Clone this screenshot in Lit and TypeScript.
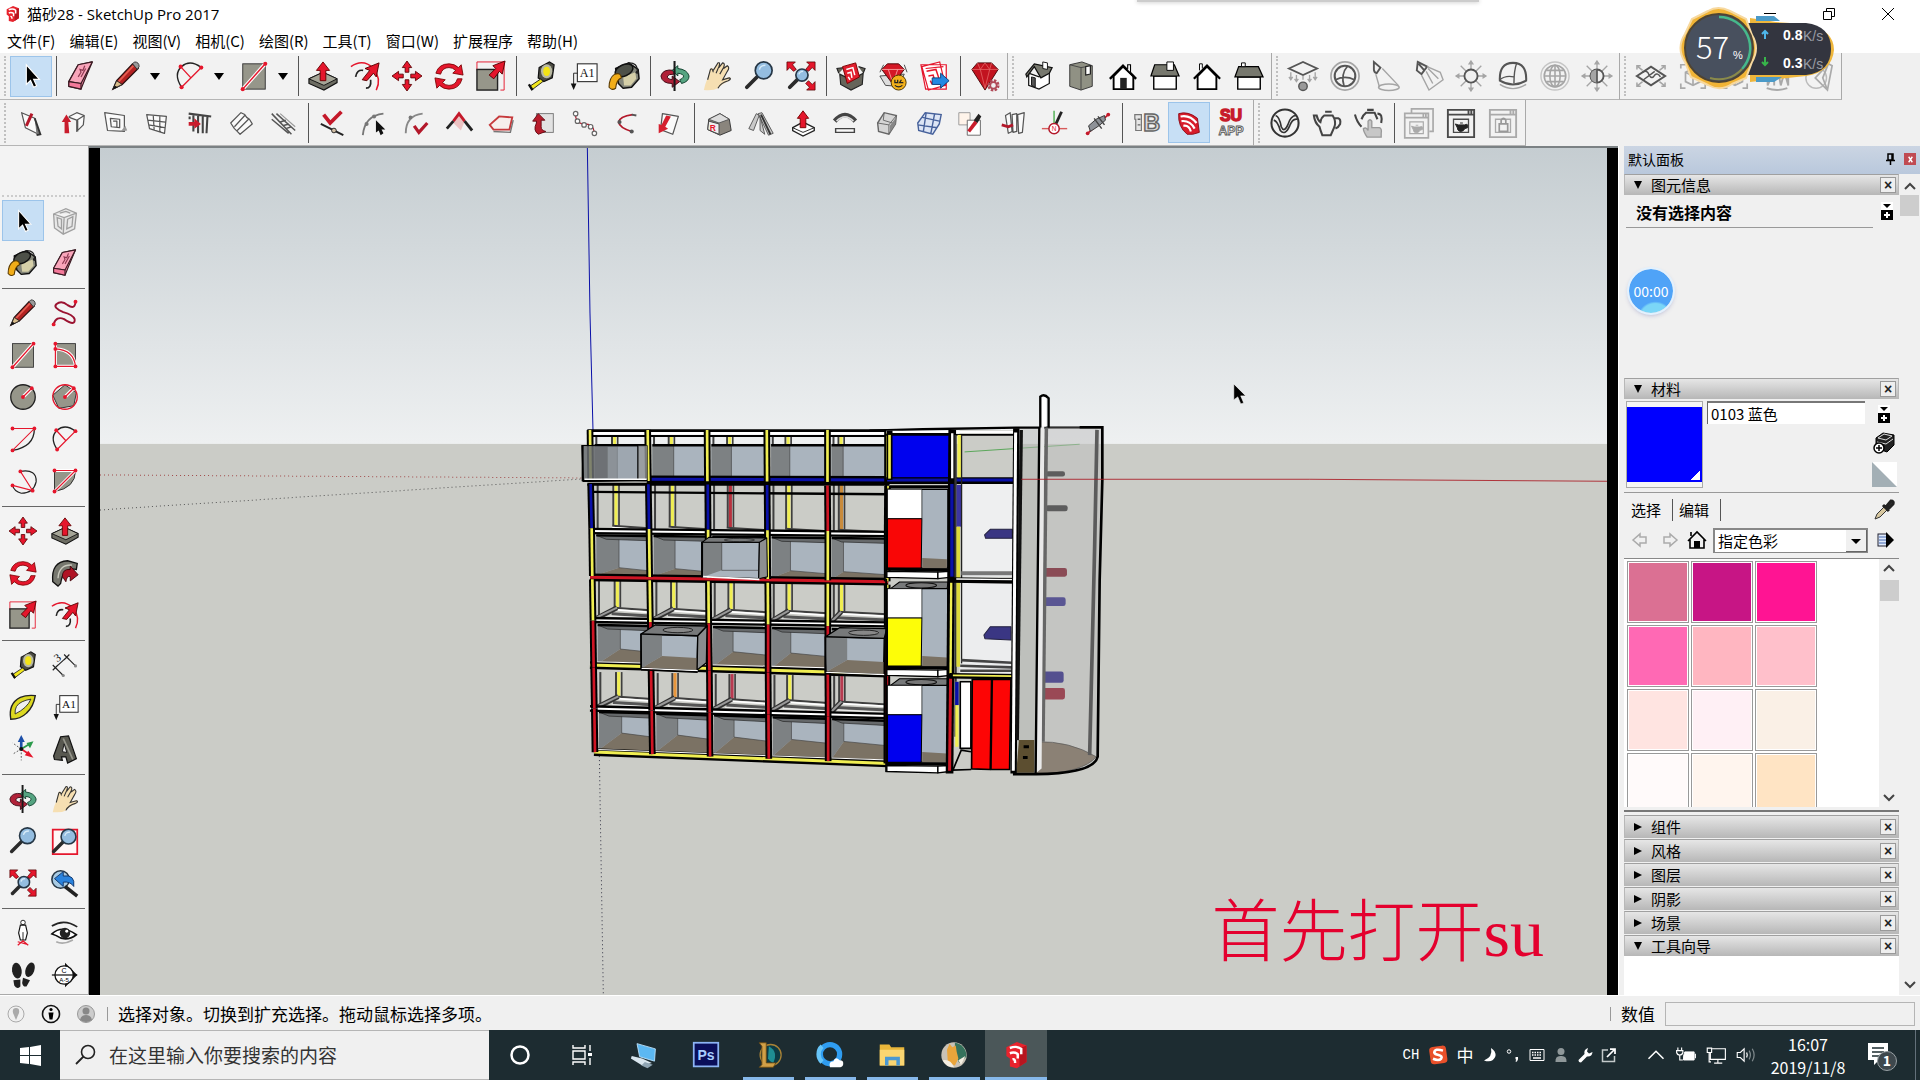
import { LitElement, html, svg, css, TemplateResult } from "lit";
import { customElement, property } from "lit/decorators.js";
import { classMap } from "lit/directives/class-map.js";

const R = "#e5162c";

const dot = (x: number, y: number) => svg`<circle cx=${x} cy=${y} r="2.2" fill=${R}/>`;

const cursor = svg`<path d="M11 4V25L15.500 20.800L18.800 28L22 26.500L18.800 19.600H25Z" fill="#000" stroke="#fff" stroke-width="1.200"/>`;
const eraser = svg`<g stroke="#3a1a22" stroke-width="1.300" stroke-linejoin="round"><path d="M3 22L13 4L28 1L20 20L16 30L3 27Z" fill="#f58ba6"/><path d="M3 22L16 24L28 1L13 4Z" fill="#f9a5ba"/><path d="M3 22L16 24V30L3 27Z" fill="#f4799a"/></g><path d="M13 17L16 12L15 9L18 10L20 5M16 17L21 8" fill="none" stroke="#8e3a52" stroke-width="1.300"/>`;
const pencil = svg`<path d="M2 30L6 21L23 3L29 8L12 25Z" fill="#b32222" stroke="#2a1010" stroke-width="1.300"/><path d="M8 22L24 5" stroke="#e45c50" stroke-width="2"/><path d="M23 3L25 1Q30 1 30 6L28 9Z" fill="#9a9a9a" stroke="#333"/><path d="M2 30L6 21L12 25Z" fill="#d9bd8c" stroke="#222"/><path d="M2 30L4 26L7 28Z" fill="#111"/>`;
const arc2 = svg`<path d="M7 28Q-2 14 7 6Q16 -2 28 7" fill="none" stroke="#222" stroke-width="1.500"/><path d="M7 28L28 7M6 6L17 18" stroke=${R} stroke-width="1.400"/>${dot(7, 28)}${dot(28, 7)}${dot(6, 6)}`;
const rect = svg`<rect x="4" y="3" width="24" height="27" fill="#96968a" stroke="#333"/><path d="M4 30L28 3" stroke="#fff" stroke-width="4"/><path d="M4 30L28 3" stroke=${R} stroke-width="1.600"/>${dot(4, 30)}${dot(28, 3)}`;
const pushpull = svg`<path d="M1 19L16 12L31 19V23L17 31L1 24Z" fill="#6d6d63" stroke="#111" stroke-width="1.200"/><path d="M1 19L16 12L31 19L17 26Z" fill="#a5a597" stroke="#111"/><path d="M13 21V10H9L16 1L23 10H19V21Z" fill=${R} stroke="#600"/>`;
const redArrow = svg`<path d="M13 20L21 10L16 8L31 2L28 17L25 13L18 21Z" fill=${R} stroke="#500"/>`;
const offset = svg`<path d="M1 6Q14 -3 25 8Q34 19 28 31" fill="none" stroke=${R} stroke-width="1.600"/><path d="M6 17Q7 9 14 10M17 29Q23 29 22 20" fill="none" stroke="#222" stroke-width="1.800"/>${redArrow}`;
const move = svg`<g fill=${R} stroke="#500" stroke-width="0.900"><path d="M16 0L21 7H18V12H14V7H11Z"/><path d="M16 32L21 25H18V20H14V25H11Z"/><path d="M0 16L7 11V14H12V18H7V21Z"/><path d="M32 16L25 11V14H20V18H25V21Z"/></g>`;
const rotate = svg`<g fill=${R} stroke="#700" stroke-width="0.900"><path d="M2 13Q5 3 16 3Q22 3 26 7L29 4L31 15L20 13L23 10Q20 7 16 7Q9 7 7 14Z"/><path d="M30 19Q27 30 16 30Q10 30 6 26L3 29L1 18L12 20L9 23Q12 26 16 26Q23 26 25 19Z"/></g>`;
const scale = svg`<path d="M1 1H30V31" fill="none" stroke=${R}/><path d="M1 1V10M26 31H30" stroke=${R}/><rect x="1" y="9" width="22" height="22" fill="#96968a" stroke="#222" stroke-width="1.500"/><path d="M14 15L21 8L18 5L31 0L28 14L25 11L19 19Z" fill=${R} stroke="#500"/>`;
const tape = svg`<path d="M14 7L25 1L30 4L28 18L19 22L13 18Z" fill="#4c4c44" stroke="#111" stroke-width="1.300"/><ellipse cx="22" cy="11" rx="6" ry="7.500" fill="#b9b9a2"/><ellipse cx="22" cy="11" rx="3.600" ry="5" fill="#f3e415"/><path d="M16 19L4 27L6 31L18 22Z" fill="#f2e71c" stroke="#222"/><path d="M3 25L7 31" stroke="#111" stroke-width="2.500"/>`;
const textA = svg`<rect x="10" y="3" width="21" height="19" fill="#fff" stroke="#333" stroke-width="1.200"/><text x="20.500" y="17.500" font-size="13" font-family="Liberation Serif, serif" text-anchor="middle" fill="#111">A1</text><path d="M10 13H6V26" fill="none" stroke="#222"/><path d="M3 24H9L6 31Z" fill="#111"/>`;
const paint = svg`<path d="M6 8L20 2L30 9L31 19L23 28L14 29L9 24Z" fill="#84867a" stroke="#111" stroke-width="1.600" stroke-linejoin="round"/><path d="M14 17L27 12L28 19L22 26L15 26Z" fill="#d5cfa8"/><ellipse cx="15" cy="10" rx="10" ry="6" transform="rotate(-24 15 10)" fill="#4d5048" stroke="#111" stroke-width="1.600"/><path d="M19 2Q30 1 29 12" fill="none" stroke="#222" stroke-width="1.300"/><circle cx="29" cy="12" r="1.700" fill="#222"/><path d="M5 14Q12 12 12 18Q7 20 6 29Q2 32 -1 28Q-1 18 5 14Z" fill="#f2ad18" stroke="#5a3a00" stroke-width="1.200"/>`;
const orbit = svg`<path d="M15 10Q3 8 1 16Q2 24 13 24V28L21 22L13 16V20Q7 19 8 16Q9 14 15 14Z" fill="#b02138" stroke="#3d0812"/><path d="M19 8V5L13 10L19 16V13Q26 14 25 17Q24 19 21 20L23 24Q31 22 31 16Q29 9 19 8Z" fill="#55a481" stroke="#0d3d2a"/><path d="M15.500 0V32" stroke="#1a1a1a" stroke-width="2.200"/>`;
const hand = svg`<path d="M2 31Q4 22 6 19L8 10Q10 5 12 9L17 2Q20 1 19 5L22 2Q25 2 24 6L28 5Q30 7 27 11L22 19L29 17Q32 18 29 21Q22 24 17 29Q12 32 2 31Z" fill="#f6dfb2"/><path d="M6 20L9 9Q11 7 12 12M12 10L17 2Q20 1 18 6L15 13M18 7L22 2Q25 2 23 7L19 14M23 8L27 5Q30 7 27 11L22 20L29 18Q32 19 28 21Q20 23 17 29" fill="none" stroke="#333" stroke-width="1.200"/>`;
const lens = (x: number, y: number, r: number) => svg`<path d=${`M${x - r * 0.7} ${y + r * 0.7}L${x - r * 2} ${y + r * 2}`} stroke="#2b2b2b" stroke-width="4" stroke-linecap="round"/><circle cx=${x} cy=${y} r=${r} fill="#94bde0" stroke="#263746" stroke-width="1.800"/><path d=${`M${x - r * 0.5} ${y - r * 0.1}Q${x - r * 0.4} ${y - r * 0.6} ${x + r * 0.2} ${y - r * 0.6}`} stroke="#d7ebf8" stroke-width="1.500" fill="none"/>`;
const zoom = lens(21, 10, 9);
const zoomWin = svg`<rect x="2" y="3" width="28" height="28" fill="#fff6f6" stroke=${R} stroke-width="2"/>${lens(20, 11, 8.5)}`;
const zoomExt = svg`${lens(17, 15, 6.5)}<g fill=${R} stroke="#500" stroke-width="0.800"><path d="M1 1H10L7 4L11 9L8 11L4 7L1 10Z"/><path d="M31 1H22L25 4L21 9L24 11L28 7L31 10Z"/><path d="M31 31H22L25 28L21 24L24 21L28 25L31 22Z"/></g>`;
const zoomPrev = svg`<circle cx="11" cy="12" r="10" fill="#a8cbe4" stroke="#263746" stroke-width="1.800"/><path d="M4 11L14 3V8Q28 6 26 20Q22 14 14 15V20Z" fill="#2a82dc" stroke="#0b2f63"/><path d="M16 20L30 31" stroke="#222" stroke-width="4"/>`;
const ruby = svg`<path d="M2 9L8 2H23L30 9L16 31Z" fill="#c2131f" stroke="#4b0609"/><path d="M8 2L11 9L16 2L21 9L23 2M2 9H30M11 9L16 29L21 9" fill="none" stroke="#e56a6a" stroke-width="0.800"/>`;
const gear = (x: number, y: number, c: string) => svg`<circle cx=${x} cy=${y} r="5" fill="none" stroke=${c} stroke-width="3" stroke-dasharray="2.500 1.400"/><circle cx=${x} cy=${y} r="3.400" fill="#f0f0f0" stroke=${c} stroke-width="1.800"/>`;
const warehouse = svg`<path d="M3 13L1 8L9 7M29 13L31 8L24 6M4 14L16 20L29 13L28 25L16 31L5 25Z" fill="#65645a" stroke="#222" stroke-width="1.200"/><path d="M7 6L21 2L25 17L12 24Z" fill="#e21d2d" stroke="#700"/><path d="M11 9L18 7L20 15M12 13L16 12L17 18M13 17L15 20" fill="none" stroke="#fff" stroke-width="1.600"/>`;
const extWh = svg`<path d="M2 12L6 4M28 4L31 12M2 16L8 26L22 27L28 14Z" fill="#ddd" stroke="#444"/><path d="M4 9L10 3H22L28 9L16 25Z" fill="#d41826" stroke="#4b0609"/><path d="M4 9H28M11 9L16 24L21 9" stroke="#f59a9a" fill="none"/><circle cx="22" cy="23" r="8" fill="#f3b11c" stroke="#4a3300"/><path d="M18 20V23H21V20M25 20L23 23H27M18 26Q22 29 26 26" stroke="#222" fill="none" stroke-width="1.300"/>`;
const layout = svg`<path d="M2 6L21 1L27 26L9 31Z M6 8L25 6M1 4H28V30H6Z" fill="#fff" stroke=${R} stroke-width="1.300"/><path d="M7 11L17 9L20 18M9 16L14 15L16 22M11 21L13 25" fill="none" stroke=${R} stroke-width="1.600"/><path d="M13 18H22V13L31 21L22 29V25H13Z" fill="#2388e2" stroke="#0c3c78"/>`;
const roofHouse = svg`<path d="M5 13V26L16 30L27 24V12L16 17Z" fill="#fff" stroke="#111" stroke-width="1.300"/><path d="M2 14L11 3L30 7L27 13L18 18L11 6L3 17Z" fill="#77786e" stroke="#111" stroke-width="1.300"/><path d="M20 8V1L25 2V9Z" fill="#fff" stroke="#111"/><path d="M8 17L12 18V28L8 26Z" fill="#555" stroke="#111"/>`;
const topView = svg`<path d="M4 4L17 1L28 5V27L16 31L4 27Z" fill="#909184" stroke="#333"/><path d="M4 4L16 7L28 5M16 7V31" fill="none" stroke="#444"/><path d="M21 6L26 5V14L21 15Z" fill="#fff" stroke="#222" stroke-width="1.300"/>`;
const frontHouse = svg`<path d="M6 16V30H27V16L16 6Z" fill="#fff" stroke="#000" stroke-width="2"/><path d="M2 19L16 5L30 19" fill="none" stroke="#000" stroke-width="2.600"/><path d="M13 18H20V30H13Z" fill="#222"/><path d="M21 9V4H24V12" fill="#fff" stroke="#000" stroke-width="1.200"/>`;
const sideHouse = svg`<path d="M4 16H28V30H4Z" fill="#fff" stroke="#000" stroke-width="1.500"/><path d="M5 4H26L31 16H1Z" fill="#77786e" stroke="#000" stroke-width="1.300"/><path d="M18 1H25V10H18Z" fill="#fff" stroke="#000"/>`;
const backHouse = svg`<path d="M6 16V30H26V16L16 6Z" fill="#fff" stroke="#000" stroke-width="2"/><path d="M2 19L16 5L30 19" fill="none" stroke="#000" stroke-width="2.400"/><path d="M8 10V3H11V8" fill="#fff" stroke="#000"/>`;
const leftHouse = svg`<path d="M4 17H28V30H4Z" fill="#fff" stroke="#000" stroke-width="1.500"/><path d="M5 6H26L31 17H1Z" fill="#77786e" stroke="#000" stroke-width="1.300"/><path d="M8 2H12V6H8Z" fill="#fff" stroke="#000"/>`;
const g = "#a5a5a5";
const D = "#555";
const sun = (half: boolean) => svg`<g stroke=${g} stroke-width="1.400" fill=${g}><path d="M16 1V31M1 16H31M5 5L27 27M27 5L5 27"/><path d="M16 0L18 3H14ZM16 32L18 29H14ZM0 16L3 14V18ZM32 16L29 14V18Z"/></g><circle cx="16" cy="16" r="7" fill="#f0f0f0" stroke=${D} stroke-width="2"/>${half ? svg`<path d="M16 9A7 7 0 0 0 16 23Z" fill=${g}/><path d="M16 9V23" stroke=${D} stroke-width="1.800"/>` : ""}`;
const lightRect = svg`<path d="M1 8L16 1L31 8L16 15Z" fill="none" stroke=${D} stroke-width="2"/><path d="M3 12V19M9 15V21M23 15V21M29 12V19M16 16V20M1 17L3 20L5 17M7 19L9 22L11 19M21 19L23 22L25 19M27 17L29 20L31 17" fill="none" stroke=${g} stroke-width="1.400"/><circle cx="16" cy="27" r="4.500" fill="#9a9a9a" stroke=${D} stroke-width="1.500"/>`;
const lightSphere = svg`<circle cx="16" cy="16" r="15" fill="none" stroke=${g} stroke-width="1.800"/><circle cx="16" cy="16" r="11" fill="none" stroke=${D} stroke-width="2.200"/><path d="M6 20Q16 15 26 20M19 5Q11 14 15 27" fill="none" stroke=${D} stroke-width="1.800"/>`;
const spot = svg`<path d="M2 1L9 7L5 13Q2 12 2 9Z" fill="none" stroke=${D} stroke-width="2"/><path d="M4 14L8 28M11 8L28 26" stroke=${g} stroke-width="1.500"/><ellipse cx="18" cy="28" rx="11" ry="3.500" fill="none" stroke=${g} stroke-width="1.600"/>`;
const ies = svg`<path d="M4 1L14 6L8 14L3 10Z M5 3L11 10" fill="none" stroke=${D} stroke-width="2"/><path d="M8 15L16 31L31 20L28 12L14 6M13 11L20 24M15 8L26 19" fill="none" stroke=${g} stroke-width="1.500"/>`;
const dome = svg`<path d="M2 21Q1 2 16 2Q31 2 30 21Q16 29 2 21Z" fill="none" stroke=${D} stroke-width="2.200"/><path d="M20 2Q17 10 17 24M2 20Q8 15 17 17" fill="none" stroke=${D} stroke-width="1.500"/><path d="M2 25Q16 34 30 25" fill="none" stroke=${g} stroke-width="1.500"/>`;
const globe = svg`<circle cx="16" cy="16" r="15" fill="none" stroke="#c5c5c5" stroke-width="1.500"/><g fill="none" stroke=${g} stroke-width="1.700"><circle cx="16" cy="16" r="11.500"/><ellipse cx="16" cy="16" rx="5.500" ry="11.500"/><path d="M16 4V28M5 16H27M7 10H25M7 22H25"/></g>`;
const plane = svg`<path d="M1 16L16 6L31 16L16 26Z" fill="none" stroke=${D} stroke-width="2.200"/><path d="M7 12Q12 9 14 15Q17 20 20 15Q23 12 26 17M8 20L20 11" fill="none" stroke=${D} stroke-width="1.600"/><path d="M2 6L7 10M30 6L25 10M2 26L7 22M30 26L25 22M1 9V5H5M27 5H31V9M1 23V27H5M27 27H31V23" fill="none" stroke=${g} stroke-width="1.600"/>`;
const bracket = svg`<g fill="none" stroke="#aaa" stroke-width="1.800"><path d="M3 8V4H8M24 4H29V8M29 24V29H24M8 29H3V24"/><path d="M8 12L16 8L24 12V22L16 26L8 22ZM8 12L16 16L24 12M16 16V26"/></g>`;
const fur = svg`<g fill="none" stroke="#a9a9a9" stroke-width="2"><path d="M6 8V26L13 10V26M17 9L20 26L24 12L28 26V9"/><path d="M5 29Q16 33 27 29"/></g>`;
const clipper = svg`<circle cx="13" cy="18" r="11" fill="none" stroke="#bbb" stroke-width="1.500"/><path d="M26 3L30 5L25 31L12 18ZM26 3L20 18L25 31" fill="none" stroke="#aaa" stroke-width="1.800"/>`;
const window3 = (c: string, inner: TemplateResult) => svg`<path d="M2 2H30V31H2ZM2 7H30M24 2V7M27 2V7" fill="none" stroke=${c} stroke-width="2"/><path d="M8 12H24V26H8Z" fill="none" stroke=${c} stroke-width="1.400"/>${inner}`;
const teapotSolid = (c: string) => svg`<path d="M10 17L13 18H20Q24 16 23 21L20 22Q19 25 15 25Q12 24 12 21ZM15 16H18" fill=${c} stroke=${c}/>`;
const teapot = svg`<g fill="none" stroke="#444" stroke-width="2.200"><path d="M2 8H5Q6 13 9 15Q10 10 13 8H22Q26 14 24 20L20 29H11Q9 24 8 20Q3 16 2 8ZM14 4H21M24 11H28Q31 12 30 17Q28 21 25 22"/></g>`;
const teapotHand = svg`<g fill="none" stroke="#444" stroke-width="2.200"><path d="M1 7Q3 15 8 20M8 12Q10 7 13 5H22L25 12M14 2H21M25 6Q31 6 29 16"/></g><path d="M15 14Q17 11 19 14V21H27Q30 22 29 27V31H14Q10 25 10 22Q13 20 15 24Z" fill="#c7c7c7" stroke="#999" stroke-width="1.400"/>`;
const vray = svg`<circle cx="16" cy="16" r="14.500" fill="none" stroke="#333" stroke-width="2.200"/><path d="M6 8Q10 9 12 20Q15 27 19 18Q22 8 28 8M4 13Q8 14 11 24Q16 30 21 19Q24 11 29 12" fill="none" stroke="#333" stroke-width="1.800"/>`;
const freehand = svg`<path d="M3 29Q6 19 15 23Q28 32 27 23Q25 18 14 15Q2 10 6 6Q12 1 19 7Q28 13 28 2" fill="none" stroke="#9b1230" stroke-width="2.200"/>${dot(3, 29)}${dot(28, 3)}`;
const rotRect = svg`<rect x="6" y="3" width="22" height="26" fill="#96968a" stroke="#333"/><path d="M5 3V29H28Q26 10 5 9" fill="none" stroke="#fff" stroke-width="3.500"/><path d="M5 3V29H28Q26 10 5 9" fill="none" stroke=${R} stroke-width="1.400"/>${dot(5, 3)}${dot(5, 9)}${dot(5, 29)}${dot(28, 29)}`;
const circle = svg`<circle cx="16" cy="16" r="14" fill="#96968a" stroke="#222" stroke-width="1.500"/><path d="M16 16L26 6" stroke="#fff" stroke-width="4"/><path d="M16 16L26 6" stroke=${R} stroke-width="1.500"/>${dot(16, 16)}${dot(26, 6)}`;
const polygonI = svg`<path d="M16 2L29 11L26 26L9 29L2 14Z" fill="#96968a" stroke="#222"/><circle cx="16" cy="16" r="14" fill="none" stroke=${R} stroke-width="1.500"/><path d="M16 16L26 6" stroke="#fff" stroke-width="4"/><path d="M16 16L26 6" stroke=${R} stroke-width="1.500"/>${dot(16, 16)}${dot(26, 6)}`;
const arcA = svg`<path d="M29 4Q29 25 4 29" fill="none" stroke="#222" stroke-width="1.500"/><path d="M4 4H29L4 29" fill="none" stroke=${R} stroke-width="1.200"/>${dot(4, 4)}${dot(29, 4)}${dot(4, 29)}`;
const arc3 = svg`<path d="M13 5Q32 2 31 17Q28 30 14 30Q6 28 4 21" fill="none" stroke="#222" stroke-width="1.400"/><path d="M13 5L27 27L4 21" fill="none" stroke=${R} stroke-width="1.200"/>${dot(13, 5)}${dot(27, 27)}${dot(4, 21)}`;
const pie = svg`<path d="M4 4H28Q28 24 4 28Z" fill="#96968a" stroke="#222"/><path d="M4 4H28L4 28" fill="none" stroke="#fff" stroke-width="3.500"/><path d="M4 4H28L4 28" fill="none" stroke=${R} stroke-width="1.300"/>${dot(4, 4)}${dot(28, 4)}${dot(4, 28)}`;
const followMe = svg`<path d="M2 26Q0 3 19 2L30 5L29 12Q14 8 11 28L8 31Z" fill="#76776e" stroke="#111" stroke-width="1.500"/><path d="M8 22Q9 6 24 7" fill="none" stroke="#c9c9bd" stroke-width="1.600"/><path d="M13 20Q13 11 22 12V8L31 18L22 25V20Q18 19 17 26Z" fill="#b01425" stroke="#3e0309"/>`;
const dim = svg`<path d="M5 19L18 7M5 19L14 28M18 7L28 17M2 16L8 22M2 22L8 16M15 4L21 10M15 10L21 4" stroke="#222" stroke-width="1.300" fill="none"/><text x="5" y="12" font-size="13" font-family="Liberation Serif, serif" transform="rotate(-35 8 9)" fill="#111">3</text><circle cx="14" cy="28" r="1.800" fill="#888"/><circle cx="28" cy="17" r="1.800" fill="#888"/>`;
const protractor = svg`<path d="M2 30Q-1 12 13 5Q20 2 30 3Q28 16 20 23Q13 30 2 30Z" fill="#dcd820" stroke="#222" stroke-width="1.600"/><path d="M7 24Q6 14 15 10Q19 8 25 7Q21 17 7 24Z" fill="#f0f0f0" stroke="#222"/>`;
const axes = svg`<path d="M14 16V4" stroke="#1c4fa8" stroke-width="3"/><path d="M14 0L18 8H10Z" fill="#1c4fa8"/><path d="M14 16L24 10" stroke="#2a9a4b" stroke-width="2"/><path d="M28 7L24 15L20 9Z" fill="#2a9a4b"/><path d="M14 16L23 22" stroke=${R} stroke-width="2"/><path d="M28 26L18 23L22 18Z" fill=${R}/><path d="M14 16V29M14 16L4 22M14 16L4 9" stroke="#444" stroke-dasharray="2 2"/><circle cx="14" cy="16" r="2.400" fill="#111"/>`;
const text3d = svg`<path d="M3 24L11 2L20 1L29 27L19 32L17 25H12L13 29L4 28Z" fill="#585850" stroke="#111" stroke-width="1.400"/><path d="M13 19L15 10L18 20Z" fill="#f0f0f0" stroke="#111"/><path d="M14 4L25 28" stroke="#96968c" stroke-width="2"/>`;
const person = svg`<circle cx="16" cy="4" r="2.600" fill="#fff" stroke="#111"/><path d="M13 7H19L21 16L19 24H13L11 16Z" fill="#fff" stroke="#111" stroke-width="1.300"/><path d="M16 15V24" stroke="#111"/><path d="M10 30L16 25L22 30M10 26L21 29" stroke=${R} fill="none" stroke-width="1.400"/>`;
const eye = svg`<path d="M1 8Q15 -1 30 9" fill="none" stroke="#222" stroke-width="2"/><path d="M1 17Q13 6 29 18Q17 27 6 19Z" fill="#fff" stroke="#111" stroke-width="1.800"/><circle cx="16" cy="16" r="6" fill="#222"/><circle cx="18" cy="14" r="1.700" fill="#fff"/><path d="M6 26Q14 30 25 24" fill="none" stroke="#aaa" stroke-width="2"/>`;
const feet = svg`<g fill="#202020"><ellipse cx="9" cy="11" rx="5.500" ry="9" transform="rotate(-8 9 11)"/><path d="M5 22L13 21L13 29Q9 33 6 28Z"/><ellipse cx="24" cy="10" rx="5" ry="8.500" transform="rotate(20 24 10)"/><path d="M16 19L24 22L20 29Q16 30 15 25Z"/></g>`;
const section = svg`<path d="M16 2L30 16L16 30" fill="#111"/><circle cx="15" cy="16" r="10.500" fill="#fff" stroke="#111" stroke-width="1.500"/><path d="M1 16H30" stroke="#111" stroke-width="1.400"/><text x="15" y="14" font-size="8" text-anchor="middle" font-family="Liberation Sans">C</text><text x="15" y="24" font-size="7" text-anchor="middle" font-family="Liberation Sans">A-5</text>`;
const component = svg`<path d="M3 8L17 2L29 7L27 25L14 31L4 24Z M3 8L15 12L29 7M15 12L14 31M7 12L12 14V25L8 22ZM19 14L25 11L24 22L18 25Z M10 7L17 5L22 7" fill="#e8e8e8" stroke="#a0a0a0" stroke-width="1.500"/>`;

// Plugin toolbar glyphs share a thin grey pen with red accents.
const P = (d: string, extra: unknown = "") => svg`<path d=${d} fill="#fafafa" stroke="#555" stroke-width="1.300" stroke-linejoin="round"/>${extra}`;
const acc = (d: string, w = 2.2) => svg`<path d=${d} fill="none" stroke="#b3182a" stroke-width=${w}/>`;
const p1 = P("M6 5L20 11L24 28L10 21Z", svg`<path d="M20 11L26 28L22 29" fill="#777" stroke="#333" stroke-width="2"/>${acc("M11 19L17 6", 3.2)}`);
const p2 = P("M12 9L20 5L28 8L27 18L20 25V13L12 10Z M20 13L28 8M21 13V25", svg`<path d="M7 27V15H4L9 7L14 15H11L12 27Z" fill="#c91c2c"/>`);
const p3 = P("M5 5L26 8V25L8 24Z M11 11L21 12V21L12 20Z M14 14H18V20", svg`<path d="M22 25L29 24L27 19" fill="#999"/>`);
const p4 = P("M5 7L26 9L24 27L8 22Z M6 13L25 15M7 18L24 21M12 8L13 24M19 9V26");
const p5 = svg`<path d="M5 6L29 9M6 9V12M10 8V25M15 8V27M20 9V27M25 9L24 27" fill="none" stroke="#444" stroke-width="2.200"/><path d="M5 15H11V11L18 17L11 22V19H5Z" fill="#c91c2c"/>`;
const p6 = P("M5 16L16 5L20 7L22 10L25 12L28 17L15 28L12 25L9 22Z M9 20L20 8M12 24L24 12");
const p7 = svg`<path d="M4 6L25 28M9 6L29 24M4 12L22 27M13 15L19 13M16 19L22 17M19 22L25 20" fill="none" stroke="#555" stroke-width="1.600"/><path d="M13 6L29 20" stroke="#999" stroke-width="1.200"/>`;
const p8 = svg`<path d="M3 17L27 29" stroke="#222" stroke-width="2"/><path d="M6 7L13 16L25 4" fill="none" stroke="#c4192a" stroke-width="4"/><circle cx="17" cy="24" r="2.500" fill="#d0bda4" stroke="#222"/>`;
const p9 = svg`<path d="M3 29Q5 8 25 6" fill="none" stroke="#777" stroke-width="2"/><circle cx="7" cy="17" r="2.200" fill="#777"/><circle cx="15" cy="9" r="2.200" fill="#777"/><path d="M17 13V26L20 24L22 29L25 27L23 23H27Z" fill="#111"/>`;
const p10 = svg`<path d="M4 27Q4 8 22 6" fill="none" stroke="#888" stroke-width="2"/><circle cx="9" cy="10" r="2" fill="#777"/>${acc("M13 19L18 26L27 16", 3.4)}`;
const p11 = svg`<path d="M10 16L16 6L22 14L18 24Z" fill="#ecc3c3"/><path d="M10 14L16 6L22 14" fill="none" stroke="#c4192a" stroke-width="3"/><path d="M3 22L10 14M22 14L30 24" fill="none" stroke="#222" stroke-width="3"/>`;
const p12 = svg`<path d="M4 18L14 9L28 10L25 23L8 23Z" fill="#f6efec" stroke="#c63a3c" stroke-width="2"/><path d="M8 25L26 26L29 13" fill="none" stroke="#777" stroke-width="1.500"/>`;
const p13 = svg`<rect x="9" y="6" width="18" height="20" fill="#e2e2e2" stroke="#777"/><path d="M11 28Q5 24 9 16V14H5L11 6L18 13H14V20Q14 24 19 25Z" fill="#b81c2b" stroke="#650912"/>`;
const p14 = svg`<g fill="#fff" stroke="#666" stroke-width="1.300"><path d="M6 5Q5 15 13 17Q25 16 26 26" fill="none" stroke="#b3182a"/><circle cx="6" cy="6" r="2.400"/><circle cx="8" cy="14" r="2.400"/><circle cx="15" cy="18" r="2.400"/><circle cx="22" cy="20" r="2.400"/><circle cx="26" cy="27" r="2.400"/></g>`;
const p15 = svg`${acc("M22 7Q8 9 7 15Q8 21 21 25", 1.8)}<circle cx="8" cy="15" r="2.200" fill="#555"/><circle cx="21" cy="25" r="2.200" fill="#555"/><path d="M21 7L26 8" stroke="#555" stroke-width="2"/>`;
const p16 = P("M9 6L26 9L20 28L7 23Z", svg`<path d="M18 9L12 20L15 22L5 27V17L8 18L13 8Z" fill="#d5202f"/>`);
const p17 = svg`<path d="M5 12L17 6L27 12L29 24L17 29L4 23Z" fill="#8a857d" stroke="#333"/><path d="M5 12L16 16L27 12L17 6Z" fill="#ddd" stroke="#555"/><path d="M5 14L16 17V28L4 23Z" fill="#eee" stroke="#444"/><text x="6" y="24" font-size="9" font-weight="700" font-family="Liberation Sans" fill=${R}>R</text>`;
const p18 = svg`<path d="M3 22L11 6L14 8L8 24ZM13 6L17 5L29 27L24 29ZM15 9L20 28L15 24Z" fill="#c9c9c9" stroke="#555"/><path d="M16 7L26 28" stroke="#333" stroke-width="2"/>`;
const p19 = svg`<path d="M5 21L16 15L28 21V24L16 30L5 24Z" fill="#fff" stroke="#222" stroke-width="1.400"/><path d="M5 21L16 26L28 21" fill="none" stroke="#222"/><path d="M13 21V11H10L16 3L22 11H19V21Z" fill=${R} stroke="#700"/>`;
const p20 = svg`<path d="M5 14Q16 1 27 14" fill="none" stroke="#444" stroke-width="5"/><path d="M7 14Q16 5 25 14" fill="none" stroke="#ddd" stroke-width="1.700"/><path d="M6 22H26V26H6Z" fill="#f8f8f8" stroke="#444" stroke-width="1.500"/>`;
const p21 = svg`<path d="M6 16L13 5L26 8L25 17L18 28L7 25Z" fill="#d6d6d6" stroke="#666" stroke-width="1.500"/><path d="M6 16L18 18L26 8M18 18V28M13 5L12 13L25 17" fill="none" stroke="#666"/><path d="M19 19L25 11V17L19 26Z" fill="#888"/>`;
const p22 = svg`<path d="M4 16L12 5L29 7L27 17L20 28L5 24ZM4 18L25 21M9 10L27 14M13 5L10 25M22 6L18 27" fill="#dce5f5" stroke="#46619b" stroke-width="1.500"/>`;
const p23 = svg`<path d="M3 5H15V18H3Z" fill="#fff4ea" stroke="#999"/><path d="M12 13H26V29H12Z" fill="#fff" stroke="#666"/><path d="M12 24L20 13L23 16L15 26Z" fill="#c91c2c"/><path d="M19 13L24 6L27 9L23 16Z" fill="#222"/>`;
const p24 = P("M8 8L13 5L15 25L11 27Z M15 7L20 6V25L16 26Z M21 7L28 5L26 26L22 27Z", acc("M4 18L11 20L16 18", 3));
const p25 = svg`<path d="M15 3V17" stroke="#4cb04f" stroke-width="1.500"/><path d="M2 22H29" stroke="#d85b5b" stroke-width="1.500"/><path d="M17 17L23 4" stroke="#222" stroke-width="3"/><circle cx="15" cy="22" r="5.500" fill="#fff" stroke="#b3182a" stroke-width="1.600"/><text x="15" y="25" font-size="7" font-family="Liberation Sans" text-anchor="middle" fill=${R}>N</text>`;
const p26 = svg`<path d="M6 27L28 7" stroke="#c4192a" stroke-width="1.800"/><circle cx="6" cy="27" r="2" fill="#c4192a"/><circle cx="28" cy="7" r="2" fill="#c4192a"/><path d="M7 19L15 12L24 8L25 13L18 19L9 25Z" fill="#8e9298" stroke="#333"/><path d="M13 11L21 22M17 9L24 18" stroke="#444" stroke-width="1.500"/>`;
const p27 = svg`<path d="M3 7H10V24H4V12H3Z" fill="#e6e6e6" stroke="#777" stroke-width="1.300"/><path d="M6 12H9M6 18H9" stroke="#666" stroke-width="1.500"/><text x="12" y="25" font-size="25" font-weight="700" font-family="Liberation Sans" fill="#dcdcdc" stroke="#666" stroke-width="1.600">B</text>`;
const p28 = svg`<path d="M5 6Q15 3 25 11L27 26L20 28L14 28Q4 20 5 6Z" fill="#d81c2b" stroke="#8f0c17"/><path d="M7 9Q17 7 24 16M8 14Q17 13 22 22M10 19Q16 18 18 25" fill="none" stroke="#fff" stroke-width="2.300"/>`;
const p29 = svg`<text x="16" y="14" font-size="17" font-weight="700" font-family="Liberation Sans" text-anchor="middle" fill="#c71b2b" stroke="#c71b2b" stroke-width="1.600">SU</text><text x="16" y="29" font-size="13" font-weight="700" font-family="Liberation Sans" text-anchor="middle" fill="#f4f4f4" stroke="#555" stroke-width="0.900">APP</text>`;
const lockWin = window3("#aaa", svg`<path d="M12 17H21V25H12ZM14 17V13Q16.500 9 19 13V17" fill="none" stroke="#999" stroke-width="1.800"/>`);
const framesWin = svg`<path d="M8 6V1H31V25H27" fill="none" stroke="#aaa" stroke-width="1.800"/><g transform="translate(-1 4) scale(0.900)">${window3("#aaa", teapotSolid("#aaa"))}</g>`;

// Shell icons
const suLogo = svg`<path d="M5 7L17 1L28 5V24L17 31L9 29V20L5 17Z" fill="#e8232d"/><path d="M23 7L28 5V24L20 29V19Z" fill="#b8151f"/><path d="M9 8Q17 5 22 9V15M9 14Q14 12 18 15V20M12 21Q15 20 15 25" fill="none" stroke="#fff" stroke-width="2.800"/>`;
const monitor = svg`<path d="M8 3L29 9L28 23L11 18Z" fill="#5cb8f2" stroke="#bfe4fb"/><path d="M2 17L14 20L25 25L14 28L1 20Z" fill="#d9e6ee"/><path d="M17 24L26 27L20 31L13 28Z" fill="#8fa5b3"/>`;
const psIcon = svg`<rect x="2" y="2" width="28" height="27" fill="#0a0f5a" stroke="#8db5f5" stroke-width="2"/><text x="16" y="22" font-size="16" font-weight="700" font-family="Liberation Sans" text-anchor="middle" fill="#a8cdff">Ps</text>`;
const lol = svg`<circle cx="19" cy="16" r="12" fill="#0d3b44" stroke="#a88236" stroke-width="1.500"/><path d="M17 6Q28 12 22 25Q18 24 16 20Z" fill="#1f8e93"/><path d="M6 2H14V25H25L22 30H6L9 27V6Z" fill="#d1a047" stroke="#6a4a14"/>`;
const qq = svg`<circle cx="16" cy="15" r="11" fill="none" stroke="#2f9df1" stroke-width="6"/><path d="M7 6A12 12 0 0 0 7 24" fill="none" stroke="#67c5f8" stroke-width="5"/><path d="M16 30Q14 23 20 23Q22 17 27 22Q32 22 31 27Q30 30 26 30Z" fill="#fff"/>`;
const folder = svg`<path d="M2 4H13L15 7H30V28H2Z" fill="#e9b63a"/><path d="M2 10H30V28H2Z" fill="#fad571"/><path d="M8 18H25V28H21V22H12V28H8Z" fill="#4a98d3"/>`;
const cat = svg`<circle cx="16" cy="16" r="14.500" fill="#c9c2b6"/><path d="M17 2A14.500 14.500 0 0 1 30 18L22 25L17 15Z" fill="#35725c"/><path d="M8 10L11 3L14 7L18 5L19 12L21 20L17 28L9 25Z" fill="#e9a53b"/><path d="M3 22Q12 20 16 30Q7 30 3 22ZM21 22L29 17L24 27Z" fill="#f4eee2"/>`;
const sogou = svg`<rect x="3" y="2" width="27" height="28" rx="6" fill="#e9502a" transform="rotate(-8 16 16)"/><path d="M24 9Q11 5 10 12Q11 15 17 16Q24 18 21 22Q17 26 8 22" fill="none" stroke="#fff" stroke-width="4"/>`;

const S = "#fff";
const tray: Record<string, TemplateResult> = {
  moon: svg`<path d="M20 2Q24 20 6 27Q24 33 29 18Q30 8 20 2Z" fill=${S}/>`,
  punct: svg`<circle cx="8" cy="9" r="3.500" fill="none" stroke=${S} stroke-width="2"/><path d="M21 20H26Q27 27 22 30L21 28Q24 26 21 24Z" fill=${S}/>`,
  keyboard: svg`<path d="M2 5H30V27H2Z" fill="none" stroke=${S} stroke-width="2"/><path d="M6 11H26M6 16H26" stroke=${S} stroke-width="3" stroke-dasharray="3 2"/><path d="M8 22H24" stroke=${S} stroke-width="3"/>`,
  user: svg`<circle cx="16" cy="9" r="7" fill="#8f989a"/><path d="M5 30Q4 17 16 18Q28 17 27 30Z" fill="#8f989a"/>`,
  wrench: svg`<path d="M3 26L15 14Q13 5 22 2L20 9L24 13L31 10Q30 20 20 19L8 31Q3 31 3 26Z" fill=${S}/>`,
  share: svg`<path d="M14 6H3V29H27V18" fill="none" stroke="#c3c9ca" stroke-width="3"/><path d="M12 20L27 5M18 4H28V14" fill="none" stroke=${S} stroke-width="3.500"/>`,
  up: svg`<path d="M4 22L16 10L28 22" fill="none" stroke=${S} stroke-width="2.500"/>`,
  battery: svg`<path d="M14 11H29V24H12V18Z" fill=${S} stroke=${S} stroke-width="1.500"/><path d="M31 14V21M3 4V8M9 4V8M1 9H11V12Q10 16 6 16Q2 16 1 12ZM6 16V24H11" fill="none" stroke=${S} stroke-width="1.800"/>`,
  network: svg`<path d="M10 6H31V23H7V12M2 5H9V12H2ZM19 23V29M13 29H26M5 12V27H8" fill="none" stroke=${S} stroke-width="1.800"/>`,
  volume: svg`<path d="M2 12H7L13 6V26L7 20H2Z" fill="none" stroke=${S} stroke-width="1.800"/><path d="M17 12Q19 16 17 20" fill="none" stroke=${S} stroke-width="2"/><path d="M21 9Q25 16 21 23M26 6Q32 16 26 26" fill="none" stroke="#7f898c" stroke-width="2"/>`,
};

const icons: Record<string, TemplateResult> = {
  cursor, eraser, pencil, arc2, rect, pushpull, offset, move, rotate, scale, tape, textA, paint, orbit, hand, zoom, zoomExt, zoomWin, zoomPrev,
  warehouse, extWh, layout, extMgr: svg`${ruby}${gear(25, 26, "#b04a58")}`,
  roofHouse, topView, frontHouse, sideHouse, backHouse, leftHouse,
  lightRect, lightSphere, spot, ies, sun: sun(false), dome, globe, sunHalf: sun(true), plane, bracket, fur, clipper,
  p1, p2, p3, p4, p5, p6, p7, p8, p9, p10, p11, p12, p13, p14, p15, p16, p17, p18, p19, p20, p21, p22, p23, p24, p25, p26, p27, p28, p29,
  vray, teapot, teapotHand, framesWin, renderWin: window3("#4a4a4a", teapotSolid("#222")), lockWin,
  freehand, rotRect, circle, polygonI, arcA, arc3, pie, followMe, dim, protractor, axes, text3d, person, eye, feet, section, component,
  suLogo, monitor, psIcon, lol, qq, folder, cat, sogou, ...tray,
};

@customElement("su-icon")
class SuIcon extends LitElement {
  @property() name = "";
  static styles = css`
    :host { display: inline-flex; width: 30px; height: 30px; }
    svg { width: 100%; height: 100%; overflow: visible; }
  `;
  render() {
    return html`<svg viewBox="0 0 32 32" aria-hidden="true">${icons[this.name]}</svg>`;
  }
}

type Pt = [number, number];
const poly = (pts: Pt[], fill: string, stroke = "none", w = 3) =>
  svg`<polygon points=${pts.map((p) => p.join(",")).join(" ")} fill=${fill} stroke=${stroke} stroke-width=${w} stroke-linejoin="round"/>`;
const line = (d: string, c = "#000", w = 3) => svg`<path d=${d} fill="none" stroke=${c} stroke-width=${w}/>`;

const YEL = "#f0ee52", RED = "#cf1524", BLU = "#0a10a8", WALL = "#7d8183", BACK = "#aab4be", FLOOR = "#7b7264", DARK = "#3f3f3f";

@customElement("su-model")
class SuModel extends LitElement {
  static styles = css`
    :host { display: block; min-width: 0; }
    svg { display: block; width: 100%; height: 100%; }
  `;

  postX(i: number, y: number) {
    const top = [92, 265, 443, 622, 804, 984][i];
    const bottom = [107, 279, 452, 628, 806, 982][i];
    return Math.round(top + ((bottom - top) * (y - 150)) / 980);
  }
  slope(x: number, l: number, r: number) {
    return Math.round(l + ((r - l) * (x - 92)) / 893);
  }

  box(i: number, tl: number, tr: number, bl: number, br: number, floor: boolean) {
    const x0 = this.postX(i, bl) + 12, x1 = this.postX(i + 1, bl) - 6;
    const t0 = this.slope(x0, tl, tr), t1 = this.slope(x1, tl, tr);
    const b0 = this.slope(x0, bl, br), b1 = this.slope(x1, bl, br);
    const depth = i === 4 ? 35 : 68 - i * 4;
    const up = floor ? (tl > 900 ? 50 : tl > 700 ? 44 : 22) : 2;
    return svg`${poly([[x0, t0], [x1, t1], [x1, b1], [x0, b0]], BACK)}
      ${poly([[x0, t0], [x0 + depth, t0], [x0 + depth, b0 - up], [x0, b0]], WALL)}
      ${floor ? poly([[x0, b0], [x0 + depth, b0 - up], [x1, b1 - up + 6], [x1, b1]], FLOOR) : ""}
      ${line(`M${x0 + depth} ${t0}V${b0 - up}L${x1} ${b1 - up + 6}`, "#444", 2)}
      ${floor ? poly([[x0, t0], [x1, t1], [x1, t1 + 14], [x0 + 30, t0 + 12]], "#66696b", "#222", 2) : ""}
      ${line(`M${x0} ${t0}L${x1} ${t1}`, "#000", 7)}`;
  }

  openBay(i: number, tl: number, tr: number, bl: number, br: number, color: string, shelf: boolean) {
    const x0 = this.postX(i, bl), x1 = this.postX(i + 1, bl);
    const lx = x0 + (i === 4 ? 40 : 72 - i * 3);
    const t = this.slope(lx, tl, tr), b = this.slope(lx, bl, br), b1 = this.slope(x1, bl, br);
    const rise = shelf ? 38 : 14;
    return svg`${line(`M${lx - 7} ${t}V${b - rise}`, DARK, 6)}${line(`M${lx + 10} ${t}V${b - rise}`, DARK, 5)}${line(`M${lx + 1} ${t}V${b - rise}`, color, 9)}
      ${line(`M${x0 + 18} ${t}V${b - 6}`, DARK, 6)}
      ${line(`M${lx - 10} ${b - rise}L${x1} ${b1 - rise + 6}`, DARK, 6)}
      ${line(`M${lx - 10} ${b - rise + 6}L${x1} ${b1 - rise + 12}`, "#fff", 5)}
      ${shelf ? svg`${line(`M${lx - 16} ${b - 20}L${x1} ${b1 - 15}`, "#555", 9)}${line(`M${lx - 20} ${b - 13}L${x1} ${b1 - 8}`, "#eee", 3)}${line(`M${x0 + 10} ${b - 6}L${lx} ${b - rise}`, "#333", 15)}${line(`M${x0 + 10} ${b - 8}L${lx} ${b - rise}`, "#999", 6)}` : ""}`;
  }

  rail(l: number, r: number, color: string, from = 92, w = 9, edge = 14) {
    const y0 = this.slope(from, l, r);
    return svg`${edge ? line(`M${from} ${y0}L986 ${r}`, "#000", w + edge) : ""}${line(`M${from} ${y0}L986 ${r}`, color, w)}`;
  }

  shelves() {
    const bays = [0, 1, 2, 3, 4];
    const posts = [0, 1, 2, 3, 4, 5];
    const rows: { y: [number, number]; c: string[] }[] = [
      { y: [150, 302], c: [YEL, YEL, YEL, YEL, YEL, YEL] },
      { y: [312, 445], c: [BLU, BLU, BLU, BLU, RED, YEL] },
      { y: [445, 588], c: [YEL, YEL, YEL, YEL, YEL, YEL] },
      { y: [598, 722], c: [YEL, YEL, YEL, YEL, YEL, YEL] },
      { y: [722, 862], c: [RED, RED, RED, RED, RED, RED] },
      { y: [862, 985], c: [RED, RED, RED, RED, RED, RED] },
      { y: [985, 1115], c: [RED, RED, RED, RED, RED, RED] },
    ];
    return svg`<g transform="translate(560 380) scale(0.333333)">
      ${line("M84 -700L92 -200L101 150", BLU, 3)}
      ${bays.map((i) => this.openBay(i, 168, 168, 212, 212, YEL, false))}
      ${bays.map((i) => this.box(i, 196, 196, 300, 300, false))}
      ${bays.map((i) => this.openBay(i, 312, 312, 450, 465, i === 2 ? "#b8323f" : i === 4 ? "#c98b3c" : YEL, false))}
      ${bays.map((i) => this.box(i, 466, 476, 585, 600, true))}
      ${bays.map((i) => this.openBay(i, 600, 612, 720, 735, YEL, true))}
      ${bays.map((i) => this.box(i, 735, 750, 850, 872, true))}
      ${bays.map((i) => this.openBay(i, 875, 890, 985, 1005, i === 2 || i === 4 ? "#b83a50" : i === 1 ? "#e8963c" : YEL, true))}
      ${bays.map((i) => this.box(i, 995, 1022, 1108, 1140, true))}
      ${line("M84 152H990", "#000", 8)}${line("M88 160H990", "#fff", 8)}${line("M88 168H990", "#000", 6)}
      ${this.rail(298, 300, BLU, 262)}${line("M84 313H990", "#000", 9)}${line("M100 336L990 343", "#000", 7)}
      ${this.rail(453, 462, "#fff", 92, 6)}${this.rail(592, 605, RED)}${this.rail(720, 733, "#fff", 92, 5)}
      ${this.rail(855, 881, YEL)}${this.rail(845, 868, "#fff", 106, 3, 0)}${this.rail(985, 1008, "#fff", 92, 6)}${this.rail(1116, 1150, YEL, 104)}${this.rail(1107, 1140, "#fff", 112, 3, 0)}
      ${rows.map((r) => posts.map((i) => {
        const skew = (y: number) => y + Math.round(((y - 150) * 0.036 * (this.postX(i, y) - 92)) / 893);
        const y0 = skew(r.y[0]), y1 = skew(r.y[1]);
        const d = `M${this.postX(i, y0)} ${y0}L${this.postX(i, y1)} ${y1}`;
        return svg`${line(d, "#000", 20)}${line(d, r.c[i], 8)}`;
      }))}
      ${poly([[68, 197], [236, 197], [236, 300], [72, 304]], "rgba(150,158,166,.6)", "#000", 4)}
      ${poly([[72, 200], [145, 200], [145, 294], [74, 300]], "rgba(90,92,94,.6)")}
      ${poly([[236, 197], [264, 197], [264, 298], [236, 300]], "rgba(150,152,154,.8)", "#000", 2)}${line("M70 195V304M70 303L265 301", "#000", 6)}
      ${line("M76 298H262", "#fff", 4)}
      ${poly([[428, 487], [600, 487], [598, 596], [428, 590]], BACK, "#000", 4)}
      ${poly([[428, 487], [487, 487], [487, 571], [432, 590]], WALL)}${line("M487 487V571H598", "#444", 2)}
      ${poly([[428, 487], [448, 472], [622, 474], [600, 487]], "#77797a", "#000", 3)}
      ${poly([[600, 487], [622, 474], [624, 590], [598, 596]], "#8d8f90", "#000", 3)}${line("M430 590L600 598", "#fff", 5)}${line("M428 485V592", "#000", 6)}
      <ellipse cx="540" cy="480" rx="45" ry="5" fill="none" stroke="#111" stroke-width="2"/>
      ${this.pulledBox(245, 762, 170, 100)}${this.pulledBox(798, 770, 176, 104)}
    </g>`;
  }

  pulledBox(x: number, y: number, w: number, h: number) {
    return svg`${poly([[x, y], [x + w, y + 5], [x + w - 2, y + h + 8], [x + 2, y + h]], BACK, "#000", 4)}
      ${poly([[x, y], [x + w * 0.37, y], [x + w * 0.37, y + h - 34], [x + 4, y + h]], WALL)}
      ${poly([[x + 4, y + h], [x + w * 0.37, y + h - 34], [x + w - 2, y + h - 28], [x + w - 2, y + h + 8]], FLOOR)}
      ${poly([[x, y], [x + 42, y - 27], [x + w + (w > 172 ? 8 : 28), y - 24], [x + w, y + 5]], "#77797a", "#000", 4)}
      ${w > 172 ? "" : poly([[x + w, y + 5], [x + w + 28, y - 24], [x + w + 26, y + h - 14], [x + w - 2, y + h + 8]], "#8a8c8e", "#000", 4)}
      <ellipse cx=${x + w * 0.65} cy=${y - 12} rx="45" ry="8" fill="#888" stroke="#111" stroke-width="2.500"/>
      ${line(`M${x} ${y + h + 3}L${x + w} ${y + h + 10}`, "#fff", 4)}${line(`M${x} ${y}V${y + h + 4}M${x} ${y + h + 7}L${x + w} ${y + h + 14}`, "#000", 5)}`;
  }

  cabinet(y: number, h: number, color: string) {
    return svg`${poly([[54, y], [235, y], [235, y + h], [54, y + h]], BACK, "#000", 4)}
      ${poly([[158, y + h - 30], [232, y + h - 26], [232, y + h], [158, y + h]], FLOOR)}
      ${poly([[54, y], [157, y], [157, y + 88], [54, y + 88]], "#fff", "#000", 2)}
      ${poly([[54, y + 88], [157, y + 88], [155, y + h], [54, y + h]], color, "#000", 3)}
      ${line(`M50 ${y - 30}V${y + h + 30}`, "#000", 6)}
      ${line(`M50 ${y + h + 4}L240 ${y + h + 6}`, "#000", 9)}
      ${poly([[52, y + h + 10], [205, y + h + 12], [205, y + h + 32], [52, y + h + 28]], "#fff", "#000", 4)}${poly([[205, y + h + 12], [240, y + h + 10], [240, y + h + 28], [205, y + h + 32]], "#fff", "#000", 4)}`;
  }

  tower() {
    const lid = (y: number) => svg`${poly([[60, y + 22], [90, y], [236, y], [232, y + 22]], "#77797a", "#000", 3)}<ellipse cx="155" cy=${y + 10} rx="46" ry="8" fill="#777" stroke="#111" stroke-width="3"/>`;
    const peg = (x: number, y: number, w: number, h: number, c: string) => svg`<rect x=${x} y=${y} width=${w} height=${h} rx="7" fill=${c}/>`;
    return svg`<g transform="translate(870 380) scale(0.333333)">
      ${poly([[270, 150], [440, 150], [440, 300], [270, 300]], "#cbccc7")}
      ${line("M285 216L630 193", "#44a045", 2.5)}
      ${poly([[275, 310], [430, 310], [428, 590], [275, 590]], "#eeeff0")}
      ${poly([[270, 605], [428, 605], [426, 880], [270, 880]], "#ecedee")}
      ${poly([[60, 160], [242, 160], [240, 296], [58, 296]], "#0002ee", "#000", 5)}
      ${line("M0 152L160 148L440 143L700 143", "#000", 7)}${line("M50 156H440", "#fff", 7)}${line("M50 165H440", "#000", 5)}
      ${line("M50 302H440", "#000", 20)}${line("M50 300H435", BLU, 9)}
      ${line("M60 152V300", "#000", 18)}${line("M60 165V296", YEL, 8)}
      ${line("M60 320H240", "#000", 8)}
      ${this.cabinet(328, 236, "#f90606")}${lid(606)}${this.cabinet(626, 232, "#fdfd08")}${lid(896)}${this.cabinet(916, 230, "#0000ee")}
      ${line("M248 150L240 1180", "#000", 23)}${line("M248 160V295", "#fff", 7)}${line("M247 312V590", BLU, 10)}${line("M245 605L243 880", YEL, 7)}${line("M243 895L240 1172", RED, 9)}
      ${line("M269 165V292", YEL, 11)}${line("M258 165V1070", "#333", 7)}${line("M268 315V440", "#3c36a0", 14)}${line("M266 440V860", "#dcd93a", 11)}${line("M276 165V850", "#222", 4)}
      ${line("M262 905V1100", YEL, 10)}${line("M262 905V975", "#0a10a8", 11)}
      ${line("M275 580H428", "#777", 12)}${line("M275 840L426 848M272 857L426 862M272 872H426", "#444", 8)}
      ${poly([[345, 465], [362, 448], [428, 448], [428, 475], [348, 475]], "#3a3683", "#23213f", 3)}
      ${poly([[343, 765], [362, 740], [424, 740], [424, 780], [346, 776]], "#3a3683", "#23213f", 3)}
      ${line("M240 600L440 603", "#000", 16)}${line("M260 597L430 599", "#fff", 4)}
      ${line("M240 887L435 890", "#000", 16)}${line("M250 886L430 888", YEL, 5)}
      ${poly([[272, 905], [304, 905], [304, 1105], [272, 1105]], "#fff", "#000", 5)}
      ${poly([[308, 898], [366, 898], [362, 1168], [306, 1166]], "#fd0505", "#000", 5)}${poly([[368, 898], [424, 898], [420, 1168], [364, 1168]], "#fd0505", "#000", 5)}
      ${line("M250 1170L275 1110L304 1115M248 1170L305 1168", "#000", 5)}
      ${poly([[440, 148], [512, 148], [500, 1182], [432, 1178]], "rgba(178,179,177,.5)")}
      ${poly([[448, 1080], [494, 1080], [494, 1178], [440, 1178]], "#5c4e30")}${line("M462 1100H478M460 1132H474", "#000", 9)}
      ${line("M440 145L432 1180", "#000", 19)}${line("M438 158L431 1172", "#fff", 9)}${line("M455 150L443 1080", "#111", 10)}
      ${poly([[530, 143], [700, 143], [696, 480], [684, 1130], [650, 1165], [500, 1180]], "rgba(190,190,190,.5)")}
      <path d="M500 1182V1085Q600 1082 680 1130Q640 1178 500 1182Z" fill="#8b8175" stroke="#555" stroke-width="2"/>
      ${peg(528, 274, 58, 16, "#5d5d5d")}${peg(528, 376, 66, 18, "#5d5d5d")}${peg(524, 564, 68, 26, "#8a4b55")}${peg(524, 652, 64, 26, "#5a5693")}${peg(520, 874, 62, 34, "#54508f")}${peg(520, 924, 66, 34, "#9a4955")}
      ${line("M682 150L675 500L660 1125", "#5b5b5b", 11)}${line("M530 143L520 1085", "#666", 11)}
      ${line("M630 142H698V300L690 600L684 1130Q672 1180 500 1182H430", "#000", 8)}
      ${poly([[513, 50], [528, 47], [524, 143], [516, 1165], [500, 1178]], "#e9e9e9")}${poly([[514, 52], [530, 52], [530, 140], [514, 140]], "#fff")}
      ${line("M512 143V50Q524 40 537 55V143M509 143L498 1180", "#000", 7)}
      ${line("M455 298H1320L2211 304", "#a9161f", 2.5)}
    </g>`;
  }

  render() {
    return html`<svg viewBox="101 148 1506 847" preserveAspectRatio="xMidYMid slice" role="img" aria-label="猫砂28">
      <defs><linearGradient id="sky" x1="0" y1="0" x2="0" y2="1"><stop offset="0" stop-color="#c5cdd1"/><stop offset="1" stop-color="#eef0f1"/></linearGradient></defs>
      <rect x="-400" y="148" width="2600" height="296" fill="url(#sky)"/>
      <rect x="-400" y="444" width="2600" height="1000" fill="#cbccc7"/>
      <path d="M101 475L583 478" stroke="#a04848" stroke-dasharray="1 3" fill="none"/>
      <path d="M101 510L583 479" stroke="#555" stroke-dasharray="1 3" fill="none"/>
      <path d="M600 756L604 995" stroke="#334" stroke-dasharray="1 3" fill="none"/>
      ${this.shelves()}${this.tower()}
      <path d="M1234 384V400L1238 397L1241 404L1244 403L1241 396H1246Z" fill="#000" stroke="#fff" stroke-width="0.600"/>
    </svg>`;
  }
}

const row1: string[][] = [
  ["cursor*", "|", "eraser", "pencil+", "arc2+", "rect+", "|", "pushpull", "offset", "move", "rotate", "scale", "|", "tape", "textA", "paint", "|", "orbit", "hand", "zoom", "zoomExt", "|", "warehouse", "extWh", "layout", "|", "extMgr"],
  ["roofHouse", "topView", "frontHouse", "sideHouse", "backHouse", "leftHouse"],
  ["lightRect", "lightSphere", "spot", "ies", "sun", "dome", "globe", "sunHalf"],
  ["plane", "bracket", "bracket", "fur", "clipper"],
];
const row2: string[][] = [
  ["p1", "p2", "p3", "p4", "p5", "p6", "p7", "|", "p8", "p9", "p10", "p11", "p12", "p13", "p14", "p15", "p16", "|", "p17", "p18", "p19", "p20", "p21", "p22", "p23", "p24", "p25", "p26", "|", "p27", "p28*", "p29"],
  ["vray", "teapot", "teapotHand", "|", "framesWin", "renderWin", "lockWin"],
];
const leftTools = [
  ["cursor*", "component", "paint", "eraser"],
  ["pencil", "freehand", "rect", "rotRect", "circle", "polygonI", "arcA", "arc2", "arc3", "pie"],
  ["move", "pushpull", "rotate", "followMe", "scale", "offset"],
  ["tape", "dim", "protractor", "textA", "axes", "text3d"],
  ["orbit", "hand", "zoom", "zoomWin", "zoomExt", "zoomPrev"],
  ["person", "eye", "feet", "section"],
];
const menus = ["文件(F)", "编辑(E)", "视图(V)", "相机(C)", "绘图(R)", "工具(T)", "窗口(W)", "扩展程序", "帮助(H)"];
const swatches = ["#db7093", "#c71585", "#ff1493", "#ff69b4", "#ffb6c1", "#ffc0cb", "#ffe4e1", "#fff0f5", "#faf0e6", "#fffafa", "#fff5ee", "#ffe4c4"];
const folded = ["组件", "风格", "图层", "阴影", "场景"];

@customElement("app-root")
class AppRoot extends LitElement {
  static styles = css`
    :host { display: flex; flex-direction: column; height: 100vh; overflow: hidden; position: relative; background: #f0f0f0; color: #000; font: 15px/20px "Noto Sans CJK SC", sans-serif; }
    * { box-sizing: border-box; }
    button { border: 0; padding: 0; margin: 0; background: none; font: inherit; color: inherit; display: flex; align-items: center; justify-content: center; }
    h2 { margin: 0; font: inherit; }
    input, select { font: inherit; border-radius: 0; margin: 0; }
    .title { height: 28px; display: flex; align-items: center; background: #fff; padding: 0 3px 0 4px; gap: 6px; font-family: "Open Sans", "Noto Sans CJK SC", sans-serif; }
    .title su-icon { width: 17px; height: 20px; }
    .title span { flex: 1; }
    .title div { display: flex; }
    .title button { width: 59px; height: 28px; }
    .title svg { width: 14px; height: 14px; }
    .menu { height: 25px; display: flex; background: #fff; padding: 3px 0 0 7px; gap: 14px; line-height: 20px; }
    .menu button { line-height: 20px; height: 20px; }
    .row { display: flex; height: 47px; }
    .row.second { height: 46px; }
    .bar { display: flex; align-items: center; border-right: 1px solid #a9a9a9; border-bottom: 1px solid #b5b5b5; padding-right: 1px; background: #f2f2f2; }
    .grip { width: 6px; height: 40px; border-left: 2px dotted #c0c0c0; margin-left: 4px; }
    .sep { width: 8px; height: 40px; display: flex; justify-content: center; }
    .sep::before { content: ""; width: 1px; background: #555; }
    .tool { width: 42px; height: 41px; border: 1px solid transparent; }
    .tool.on { background: #c7dff5; border-color: #9cc4ea; }
    .tool.split { width: 48px; }
    .caret { width: 16px; height: 41px; justify-content: flex-start; }
    .caret::before { content: ""; border: 5px solid transparent; border-top: 7px solid #000; border-bottom: 0; }
    .tool.small su-icon { width: 30px; height: 30px; }
    .main { flex: 1; min-height: 0; display: flex; }
    .left { width: 89px; padding: 49px 3px 0 2px; border-right: 1px solid #999; background: #f3f3f3; border-bottom: 1px solid #aaa; }
    .left .group { display: grid; grid-template-columns: 42px 42px; grid-auto-rows: 42px; }
    .left .group + .group { border-top: 1px solid #666; margin-top: 4px; padding-top: 3px; }
    .left .top { border-top: 2px dotted #ccc; padding-top: 3px; }
    .left su-icon { width: 28px; height: 28px; }
    .canvas { flex: 1; min-width: 0; position: relative; border-top: 2px solid #7b8184; display: flex; }
    .canvas su-model { flex: 1; border: solid #000; border-width: 0 11px; }
    .caption { position: absolute; right: 74px; bottom: 28px; color: #e4002e; font: 300 68px/68px "Liberation Serif", "Noto Sans CJK SC", serif; }
    .tray { width: 302px; padding-left: 5px; display: flex; flex-direction: column; background: #f0f0f0; border-left: 1px solid #fff; }
    .trayhead { height: 28px; display: flex; align-items: center; background: linear-gradient(#cbd5e3, #b9c8dc); padding: 0 4px 2px 4px; font-size: 14px; gap: 8px; }
    .trayhead h2 { flex: 1; }
    .trayhead svg { width: 11px; height: 13px; }
    .trayhead .close { width: 12px; height: 12px; background: #c04b52; }
    .traybody { flex: 1; min-height: 0; display: flex; }
    .sections { flex: 1; min-width: 0; display: flex; flex-direction: column; }
    .scroll { width: 21px; display: flex; flex-direction: column; align-items: center; justify-content: space-between; background: #f0f0f0; padding: 7px 0 5px; position: relative; }
    .scroll svg { width: 12px; height: 10px; }
    .scroll i { position: absolute; top: 21px; width: 19px; height: 21px; background: #cdcdcd; }
    .head { height: 23px; margin-bottom: 1px; flex: none; display: flex; align-items: center; border: 1px solid #b8b8b8; border-top-color: #a0a0a0; background: linear-gradient(#e6e6e6, #b9b9b9); padding: 0 2px 0 9px; }
    .head.open { height: 21px; margin: 0; }
    .head .tri { width: 17px; display: flex; }
    .head .tri::before { content: ""; border: 4px solid transparent; border-left: 8px solid #000; border-right: 0; }
    .head.open .tri::before { border: 4px solid transparent; border-top: 8px solid #000; border-bottom: 0; }
    .head h2 { flex: 1; line-height: 18px; }
    .head button { width: 16px; height: 16px; border: 1px solid #999; background: #eee; font: bold 14px/14px "Liberation Sans", sans-serif; color: #222; }
    .entity { height: 183px; padding: 5px 6px 0 2px; display: flex; align-items: flex-start; gap: 8px; }
    .entity p { flex: 1; margin: 0; font-weight: 700; font-size: 16px; line-height: 24px; padding: 0 0 3px 10px; border-bottom: 1px solid #999; }
    .plus { width: 12px; height: 18px; margin-top: 2px; }
    .plus svg { width: 12px; height: 18px; }
    .mat { display: flex; height: 94px; padding: 2px 0 4px 2px; gap: 4px; border-bottom: 1px solid #999; align-items: flex-start; }
    .preview { width: 77px; height: 87px; border: 1px solid #aaa; display: flex; align-items: center; background: #f5f5f5; }
    .preview::before { content: ""; width: 100%; height: 75px; background: linear-gradient(135deg, transparent 50%, #fff 50%) no-repeat right 2px bottom 2px / 10px 10px, #0000ff; }
    .name { flex: 1; min-width: 0; height: 23px; border: 0; border-left: 1px solid #666; border-top: 2px solid #777; background: #fff; padding: 0 3px; }
    .mat .side { width: 30px; display: flex; flex-direction: column; align-items: center; justify-content: space-between; height: 86px; padding-top: 2px; }
    .mat .side svg.box { width: 22px; height: 22px; }
    .mat .side svg.def { width: 25px; height: 25px; }
    .tabs { display: flex; height: 33px; align-items: center; padding-left: 7px; }
    .tabs button { width: 42px; height: 22px; justify-content: flex-start; border-right: 1px solid #555; margin-right: 6px; }
    .tabs button.picker { margin: 0 4px 0 auto; border: 0; width: 22px; }
    .tabs svg { width: 22px; height: 22px; }
    .nav { display: flex; height: 33px; align-items: center; padding: 0 6px 4px 8px; gap: 11px; border-bottom: 1px solid #888; }
    .nav button { width: 17px; height: 20px; flex: none; }
    .nav svg { width: 20px; height: 20px; flex: none; overflow: visible; }
    .pick { flex: 1; min-width: 0; position: relative; display: flex; height: 25px; margin: 0 -3px; }
    .pick select { appearance: none; width: 100%; background: #fff; border: 1px solid #888; border-width: 2px 1px 1px 2px; padding: 0 3px; color: #000; line-height: 20px; }
    .pick::after { content: ""; position: absolute; right: 7px; top: 11px; border: 5px solid transparent; border-top-color: #000; border-bottom: 0; pointer-events: none; }
    .pick::before { content: ""; position: absolute; right: 1px; top: 2px; bottom: 1px; width: 20px; background: #f0f0f0; border-right: 1px solid #666; border-bottom: 1px solid #666; pointer-events: none; }
    .palette { height: 248px; display: flex; background: #fff; }
    .palette .scroll { width: 20px; padding: 4px 0; }
    .swatches { flex: 1; overflow: hidden; display: grid; grid-template-columns: repeat(3, 62px); grid-auto-rows: 62px; gap: 2px; padding: 2px 3px 0; }
    .swatches button { border: 1px solid #999; padding: 1px; }
    .swatches button span { width: 100%; height: 100%; }
    .rule { height: 8px; display: flex; align-items: center; flex: none; }
    .rule::before { content: ""; flex: 1; border-top: 2px solid #777; }
    .guide { flex: 1; background: #fff; }
    .status { height: 35px; display: flex; align-items: center; font-size: 17px; line-height: 24px; padding: 2px 5px 0 5px; gap: 13px; border-top: 1px solid #fff; }
    .status svg { width: 22px; height: 22px; flex: none; }
    .status .text { flex: 1; border-left: 1px solid #999; height: 14px; display: flex; align-items: center; padding-left: 10px; margin-left: -3px; }
    .status label { border-left: 1px solid #999; height: 14px; display: flex; align-items: center; padding-left: 10px; margin-right: -3px; }
    .status input { width: 250px; height: 24px; border: 1px solid #b5b5b5; background: #f0f0f0; }
    .taskbar { height: 50px; display: flex; background: #1d2c31; color: #fff; }
    .start { width: 60px; }
    .start svg { width: 21px; height: 21px; }
    .search { width: 429px; background: #f0f0f0; border: 1px solid #b5b5b5; border-width: 1px 0; display: flex; align-items: center; padding-left: 15px; gap: 12px; }
    .search svg { width: 22px; height: 22px; flex: none; }
    .search input { border: 0; background: none; flex: 1; font-size: 19px; padding: 0; outline: 0; }
    .search input::placeholder { color: #333; opacity: 1; }
    .app { width: 62px; }
    .app su-icon { width: 28px; height: 28px; }
    .app svg { width: 24px; height: 24px; }
    .running { background: linear-gradient(#86b8ea, #86b8ea) no-repeat center bottom / 51px 3px; }
    .active { background-color: #4b5759; background-size: 100% 3px; }
    .systray { margin-left: auto; display: flex; align-items: center; padding-right: 4px; }
    .systray button { width: 24px; height: 50px; }
    .systray .wide { width: 30px; }
    .systray su-icon { width: 16px; height: 16px; }
    .systray .wide su-icon { width: 20px; height: 20px; }
    .ch { font: 14px/20px "Liberation Mono", monospace; }
    .ime { font-size: 17px; }
    .gap { width: 20px; }
    .clock { width: 94px; text-align: center; font-size: 16px; line-height: 23px; padding-top: 2px; }
    .note { width: 52px; display: flex; align-items: center; justify-content: center; }
    .note svg { width: 32px; height: 32px; }
    .desk { height: 50px; border-left: 1px solid #63707a; margin-left: 8px; }
    .notch { position: absolute; top: 0; left: 1137px; width: 342px; height: 2px; background: #ccc; box-shadow: 0 0 4px #aaa; }
    .meter { position: absolute; top: 4px; right: 82px; width: 162px; height: 90px; }
    .timer { position: absolute; right: 247px; top: 269px; width: 44px; height: 44px; border-radius: 50%; background: radial-gradient(circle at 60% 115%, #7bd6f7 28%, #4fa3f7 32%); outline: 2px solid #e3f1fd; color: #fff; font-size: 14px; box-shadow: 0 2px 5px #aac; }
  `;

  tool(id: string, small = false) {
    if (id === "|") return html`<span class="sep"></span>`;
    const name = id.replace(/[*+]/g, "");
    const split = id.endsWith("+");
    return html`<button class=${classMap({ tool: true, on: id.endsWith("*"), split, small })} aria-label=${name}><su-icon name=${name}></su-icon></button>${split ? html`<button class="caret" aria-label=${name}></button>` : ""}`;
  }

  head(label: string, open = false) {
    return html`<div class=${classMap({ head: true, open })}><span class="tri"></span><h2>${label}</h2><button aria-label="关闭">×</button></div>`;
  }

  scroll() {
    return html`<div class="scroll"><svg viewBox="0 0 12 10"><path d="M1 8L6 3L11 8" fill="none" stroke="#444" stroke-width="2"/></svg><i></i><svg viewBox="0 0 12 10"><path d="M1 2L6 7L11 2" fill="none" stroke="#444" stroke-width="2"/></svg></div>`;
  }

  plus() {
    return html`<button class="plus" aria-label="展开"><svg viewBox="0 0 12 18"><rect width="12" height="18" fill="#fff"/><path d="M2 2H10L6 6Z" fill="#000"/><rect y="8" width="12" height="10"/><path d="M6 10V16M3 13H9" stroke="#fff" stroke-width="2"/></svg></button>`;
  }

  renderTray() {
    return html`<aside class="tray">
      <div class="trayhead"><h2>默认面板</h2>
        <svg viewBox="0 0 11 13"><path d="M3 1H8V7H3ZM7 1V7M1 7.500H10M5.500 8V12" fill="none" stroke="#000" stroke-width="1.500"/></svg>
        <button class="close" aria-label="关闭"><svg viewBox="0 0 12 12"><path d="M4 3L8 9M8 3L4 9" stroke="#fff" stroke-width="1.500"/></svg></button></div>
      <div class="traybody"><div class="sections">
        ${this.head("图元信息", true)}
        <div class="entity"><p>没有选择内容</p>${this.plus()}</div>
        ${this.head("材料", true)}
        <div class="mat"><span class="preview"></span><input class="name" aria-label="材料名称" .value=${"0103 蓝色"}>
          <div class="side">${this.plus()}
            <svg class="box" viewBox="0 0 22 22"><path d="M3 6L10 1L21 3V13L14 20L3 16Z" fill="#222" stroke="#000"/><path d="M5 6L11 2L19 4L13 8ZM4 10L13 12L20 7" fill="none" stroke="#ddd"/><circle cx="6" cy="16" r="5" fill="#fff" stroke="#000" stroke-width="1.500"/><path d="M6 13V19M3 16H9" stroke="#000" stroke-width="1.500"/></svg>
            <svg class="def" viewBox="0 0 25 25"><rect width="25" height="25" fill="#fff"/><path d="M0 0L25 25H0Z" fill="#a3afb5"/></svg></div></div>
        <div class="tabs"><button>选择</button><button>编辑</button><button class="picker" aria-label="取样"><svg viewBox="0 0 22 22"><path d="M2 20L4 15L12 7L15 10L7 18Z" fill="#d8c8a0" stroke="#333"/><path d="M10 6L16 12M13 8L18 2Q21 2 20 5L15 10" stroke="#222" stroke-width="3" fill="#444"/></svg></button></div>
        <div class="nav">
          <button aria-label="后退"><svg viewBox="0 0 20 20"><path d="M2 10L9 4V7H15V13H9V16Z" fill="none" stroke="#aaa" stroke-width="1.500"/></svg></button>
          <button aria-label="前进"><svg viewBox="0 0 20 20"><path d="M18 10L11 4V7H5V13H11V16Z" fill="none" stroke="#aaa" stroke-width="1.500"/></svg></button>
          <button aria-label="模型中"><svg viewBox="0 0 20 20"><path d="M3 9V18H17V9M1 11L10 2L19 11M4 6V2" fill="none" stroke="#000" stroke-width="1.600"/><path d="M7 11H13V18H7Z"/></svg></button>
          <div class="pick"><select aria-label="材料集"><option>指定色彩</option></select></div>
          <button aria-label="详细信息"><svg viewBox="0 0 20 20"><rect x="3" y="4" width="9" height="12" fill="#dfe9fa" stroke="#223"/><path d="M4 7H11M4 10H11M4 13H11" stroke="#4468b0"/><path d="M11 2L19 10L11 18Z"/></svg></button>
        </div>
        <div class="palette"><div class="swatches">${swatches.map((c) => html`<button aria-label=${c}><span style="background:${c}"></span></button>`)}</div>${this.scroll()}</div>
        <div class="rule"></div>
        ${folded.map((f) => this.head(f))}
        ${this.head("工具向导", true)}
        <div class="guide"></div>
      </div>${this.scroll()}</div>
    </aside>`;
  }

  render() {
    const bars = (groups: string[][], small: boolean) => groups.map((gr) => html`<div class="bar"><span class="grip"></span>${gr.map((t) => this.tool(t, small))}</div>`);
    const apps: [string, string][] = [["monitor", ""], ["psIcon", ""], ["lol", "running"], ["qq", "running"], ["folder", "running"], ["cat", "running"], ["suLogo", "running active"]];
    return html`
      <header class="title"><su-icon name="suLogo"></su-icon><span>猫砂28 - SketchUp Pro 2017</span>
        <div><button aria-label="最小化"><svg viewBox="0 0 14 14"><path d="M1 6.500H13" stroke="#000"/></svg></button>
        <button aria-label="还原"><svg viewBox="0 0 14 14"><path d="M1.500 4.500H9.500V12.500H1.500ZM4.500 4V1.500H12.500V9.500H10" fill="none" stroke="#000"/></svg></button>
        <button aria-label="关闭"><svg viewBox="0 0 14 14"><path d="M1 1L13 13M13 1L1 13" stroke="#000"/></svg></button></div></header>
      <nav class="menu">${menus.map((m) => html`<button>${m}</button>`)}</nav>
      <div class="row">${bars(row1, false)}</div>
      <div class="row second">${bars(row2, true)}</div>
      <main class="main">
        <div class="left"><div class="top"></div>${leftTools.map((gr) => html`<div class="group">${gr.map((t) => this.tool(t))}</div>`)}</div>
        <div class="canvas"><su-model></su-model><div class="caption">首先打开su</div></div>
        ${this.renderTray()}
      </main>
      <footer class="status">
        <svg viewBox="0 0 22 22"><circle cx="11" cy="11" r="8" fill="none" stroke="#aaa"/><path d="M11 17L8 10Q7 5 11 5Q15 5 14 10Z" fill="#aaa"/></svg>
        <svg viewBox="0 0 22 22"><circle cx="11" cy="11" r="8.500" fill="none" stroke="#111" stroke-width="1.600"/><circle cx="11" cy="6.500" r="1.600"/><path d="M8.500 9.500H13.500L12.500 16.500H9.500Z" fill="#000"/></svg>
        <svg viewBox="0 0 22 22"><circle cx="11" cy="11" r="8.500" fill="#ccc" stroke="#999"/><circle cx="11" cy="8" r="3.500" fill="#888"/><path d="M5 17Q6 12 11 12Q16 12 17 17Q11 21 5 17Z" fill="#888"/></svg>
        <span class="text">选择对象。切换到扩充选择。拖动鼠标选择多项。</span>
        <label for="vcb">数值</label><input id="vcb">
      </footer>
      <footer class="taskbar">
        <button class="start" aria-label="开始"><svg viewBox="0 0 21 21"><path d="M0 3L9 2V10H0ZM10 2L21 0V10H10ZM0 11H9V19L0 18ZM10 11H21V21L10 19Z" fill="#fff"/></svg></button>
        <div class="search"><svg viewBox="0 0 22 22"><circle cx="13" cy="8" r="6.500" fill="none" stroke="#222" stroke-width="1.600"/><path d="M8.500 12.500L1 20" stroke="#222" stroke-width="1.800"/></svg><input aria-label="搜索" placeholder="在这里输入你要搜索的内容"></div>
        <button class="app" aria-label="Cortana"><svg viewBox="0 0 24 24"><circle cx="12" cy="12" r="8.500" fill="none" stroke="#fff" stroke-width="2.500"/></svg></button>
        <button class="app" aria-label="任务视图"><svg viewBox="0 0 24 24"><path d="M3 2V5H15V2M3 22V19H15V22M3 8H15V16H3ZM20 2V8M20 15V22" fill="none" stroke="#fff" stroke-width="1.400"/><path d="M18 10H22V13H18Z" fill="#fff"/></svg></button>
        ${apps.map(([n, c]) => html`<button class="app ${c}" aria-label=${n}><su-icon name=${n}></su-icon></button>`)}
        <div class="systray">
          <button class="ch">CH</button><button class="wide" aria-label="搜狗"><su-icon name="sogou"></su-icon></button><button class="ime">中</button>
          ${["moon", "punct", "keyboard", "user", "wrench", "share"].map((n) => html`<button aria-label=${n}><su-icon name=${n}></su-icon></button>`)}
          <span class="gap"></span>
          ${["up", "battery", "network", "volume"].map((n) => html`<button class="wide" aria-label=${n}><su-icon name=${n}></su-icon></button>`)}
          <div class="clock">16:07<br>2019/11/8</div>
          <div class="note"><svg viewBox="0 0 32 32"><path d="M3 4H23V21H14L9 26V21H3Z" fill="#fff"/><path d="M7 9H19M7 13H19M7 17H15" stroke="#1d2c31" stroke-width="1.500"/><circle cx="22" cy="22" r="9.500" fill="#3e484d" stroke="#98a0a4"/><text x="22" y="27" font-size="14" text-anchor="middle" font-weight="700" fill="#fff">1</text></svg></div>
          <span class="desk"></span>
        </div>
      </footer>
      <div class="notch"></div>
      <svg class="meter" viewBox="0 0 162 90">
        <path d="M74 14L100 18L130 20Q158 26 158 46Q156 68 130 72L74 78Z" fill="#eeb63c"/>
        <path d="M80 12H98L104 17H80ZM80 78H98L106 73H80Z" fill="#4b9ac8"/>
        <path d="M64 19H130Q155 22 155 45Q155 68 130 71H64Z" fill="#33353f"/>
        <path d="M32 7Q42 1 54 7L70 15L76 31Q84 44 76 58L70 74L56 80Q44 88 32 81L15 73L9 58Q0 44 9 30L16 15Z" fill="#f1b436" stroke="#f7d9a0" stroke-width="2"/>
        <circle cx="43" cy="44" r="34" fill="#48505e" stroke="#4e4434" stroke-width="2"/>
        <path d="M43 13A31 31 0 0 1 66 65" fill="none" stroke="#46b98b" stroke-width="2.500"/><path d="M66 65A31 31 0 0 1 34 74" fill="none" stroke="#8a8a4a" stroke-width="2"/>
        <text x="20" y="55" font-size="31" font-weight="300" font-family="Noto Sans CJK SC, sans-serif" fill="#fff">57</text><text x="57" y="55" font-size="11" font-family="Liberation Sans" fill="#fff">%</text>
        <path d="M89 35V27M86 30L89 27L92 30" stroke="#4fb6ea" stroke-width="2" fill="none"/><path d="M89 53V61M86 58L89 61L92 58" stroke="#37b54a" stroke-width="2" fill="none"/>
        <g font-family="Liberation Sans" font-size="14"><text x="107" y="36" fill="#fff" font-weight="700">0.8</text><text x="127" y="37" fill="#9a9ca4">K/s</text><text x="107" y="64" fill="#fff" font-weight="700">0.3</text><text x="127" y="65" fill="#9a9ca4">K/s</text></g>
      </svg>
      <button class="timer">00:00</button>`;
  }
}
